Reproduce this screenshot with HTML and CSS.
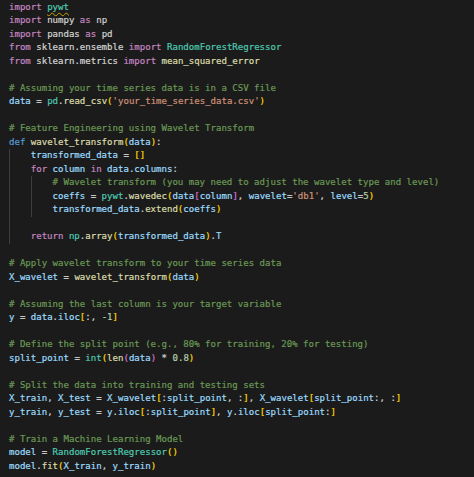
FILE: index.html
```html
<!DOCTYPE html>
<html>
<head>
<meta charset="utf-8">
<link rel="stylesheet" href="styles.css">
</head>
<body>
<div class="editor">
<div class="ln"><span class="kw">import</span> <span class="ty warn">pywt</span></div>
<div class="ln"><span class="kw">import</span> <span class="md">numpy</span> <span class="kw">as</span> <span class="md">np</span></div>
<div class="ln"><span class="kw">import</span> <span class="md">pandas</span> <span class="kw">as</span> <span class="md">pd</span></div>
<div class="ln"><span class="kw">from</span> <span class="md">sklearn.ensemble</span> <span class="kw">import</span> <span class="ty">RandomForestRegressor</span></div>
<div class="ln"><span class="kw">from</span> <span class="md">sklearn.metrics</span> <span class="kw">import</span> <span class="fn">mean_squared_error</span></div>
<div class="ln"> </div>
<div class="ln"><span class="cm"># Assuming your time series data is in a CSV file</span></div>
<div class="ln"><span class="vr">data</span> <span class="op">=</span> <span class="ty">pd</span>.<span class="fn">read_csv</span><span class="b1">(</span><span class="st">'your_time_series_data.csv'</span><span class="b1">)</span></div>
<div class="ln"> </div>
<div class="ln"><span class="cm"># Feature Engineering using Wavelet Transform</span></div>
<div class="ln"><span class="df">def</span> <span class="fn">wavelet_transform</span><span class="b1">(</span><span class="vr">data</span><span class="b1">)</span>:</div>
<div class="ln"><span class="ig"></span><span class="vr">transformed_data</span> <span class="op">=</span> <span class="b1">[]</span></div>
<div class="ln"><span class="ig"></span><span class="kw">for</span> <span class="vr">column</span> <span class="kw">in</span> <span class="vr">data</span>.<span class="vr">columns</span>:</div>
<div class="ln"><span class="ig"></span><span class="ig"></span><span class="cm"># Wavelet transform (you may need to adjust the wavelet type and level)</span></div>
<div class="ln"><span class="ig"></span><span class="ig"></span><span class="vr">coeffs</span> <span class="op">=</span> <span class="ty">pywt</span>.<span class="fn">wavedec</span><span class="b1">(</span><span class="vr">data</span><span class="b2">[</span><span class="vr">column</span><span class="b2">]</span>, <span class="vr">wavelet</span><span class="op">=</span><span class="st">'db1'</span>, <span class="vr">level</span><span class="op">=</span><span class="nm">5</span><span class="b1">)</span></div>
<div class="ln"><span class="ig"></span><span class="ig"></span><span class="vr">transformed_data</span>.<span class="fn">extend</span><span class="b1">(</span><span class="vr">coeffs</span><span class="b1">)</span></div>
<div class="ln"><span class="ig"></span> </div>
<div class="ln"><span class="ig"></span><span class="kw">return</span> <span class="ty">np</span>.<span class="fn">array</span><span class="b1">(</span><span class="vr">transformed_data</span><span class="b1">)</span>.<span class="vr">T</span></div>
<div class="ln"> </div>
<div class="ln"><span class="cm"># Apply wavelet transform to your time series data</span></div>
<div class="ln"><span class="vr">X_wavelet</span> <span class="op">=</span> <span class="fn">wavelet_transform</span><span class="b1">(</span><span class="vr">data</span><span class="b1">)</span></div>
<div class="ln"> </div>
<div class="ln"><span class="cm"># Assuming the last column is your target variable</span></div>
<div class="ln"><span class="vr">y</span> <span class="op">=</span> <span class="vr">data</span>.<span class="vr">iloc</span><span class="b1">[</span>:, <span class="nm">-1</span><span class="b1">]</span></div>
<div class="ln"> </div>
<div class="ln"><span class="cm"># Define the split point (e.g., 80% for training, 20% for testing)</span></div>
<div class="ln"><span class="vr">split_point</span> <span class="op">=</span> <span class="ty">int</span><span class="b1">(</span><span class="fn">len</span><span class="b2">(</span><span class="vr">data</span><span class="b2">)</span> <span class="op">*</span> <span class="nm">0.8</span><span class="b1">)</span></div>
<div class="ln"> </div>
<div class="ln"><span class="cm"># Split the data into training and testing sets</span></div>
<div class="ln"><span class="vr">X_train</span>, <span class="vr">X_test</span> <span class="op">=</span> <span class="vr">X_wavelet</span><span class="b1">[</span>:<span class="vr">split_point</span>, :<span class="b1">]</span>, <span class="vr">X_wavelet</span><span class="b1">[</span><span class="vr">split_point</span>:, :<span class="b1">]</span></div>
<div class="ln"><span class="vr">y_train</span>, <span class="vr">y_test</span> <span class="op">=</span> <span class="vr">y</span>.<span class="vr">iloc</span><span class="b1">[</span>:<span class="vr">split_point</span><span class="b1">]</span>, <span class="vr">y</span>.<span class="vr">iloc</span><span class="b1">[</span><span class="vr">split_point</span>:<span class="b1">]</span></div>
<div class="ln"> </div>
<div class="ln"><span class="cm"># Train a Machine Learning Model</span></div>
<div class="ln"><span class="vr">model</span> <span class="op">=</span> <span class="ty">RandomForestRegressor</span><span class="b1">()</span></div>
<div class="ln"><span class="vr">model</span>.<span class="fn">fit</span><span class="b1">(</span><span class="vr">X_train</span>, <span class="vr">y_train</span><span class="b1">)</span></div>
</div>
</body>
</html>
```
FILE: styles.css
```css
html, body {
  margin: 0;
  padding: 0;
  background: #1b1b1b;
  height: 100%;
  overflow: hidden;
}
.editor {
  padding: 0.5px 0 0 9px;
  font-family: "DejaVu Sans Mono", monospace;
  font-size: 9.05px;
  line-height: 13.5px;
  color: #d4d4d4;
  -webkit-text-stroke: 0.2px currentColor;
}
.ln {
  white-space: pre;
  height: 13.5px;
}
.ig {
  display: inline-block;
  width: 4ch;
  height: 13.5px;
  vertical-align: top;
  box-shadow: inset 1px 0 0 #3e3e3e;
}
.kw { color: #c586c0; }
.df { color: #569cd6; }
.md { color: #d4d4d4; }
.ty { color: #4ec9b0; }
.fn { color: #dcdcaa; }
.vr { color: #9cdcfe; }
.st { color: #ce9178; }
.cm { color: #6a9955; }
.nm { color: #b5cea8; }
.op { color: #d4d4d4; }
.b1 { color: #ffd700; }
.b2 { color: #da70d6; }
.warn {
  text-decoration: underline wavy #c8a500;
  text-decoration-thickness: 1px;
  text-underline-offset: 2px;
}
```
